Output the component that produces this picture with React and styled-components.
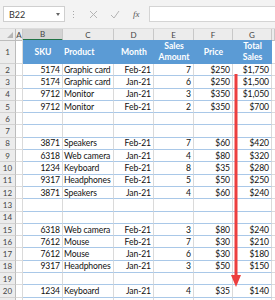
import React from 'react';
import styled, { createGlobalStyle } from 'styled-components';

const GlobalStyle = createGlobalStyle`
    html, body {
        margin: 0;
        padding: 0;
        background: #ffffff;
    }
    body {
        font-family: Lato, 'Liberation Sans', sans-serif;
        width: 275px;
        height: 300px;
        overflow: hidden;
    }
`;

const COLS = '16px 7px 40px 51px 40px 40px 39px 39px 1fr';
const ROW_H = 12.3;

const Wrapper = styled.div`
    position: relative;
    width: 275px;
    height: 300px;
    overflow: hidden;
`;

const FormulaBar = styled.div`
    display: flex;
    align-items: center;
    height: 29px;
    padding: 0 0 0 3px;
    background: #f3f3f3;
    box-sizing: border-box;
    border-bottom: 1px solid #dcdcdc;
`;

const NameBox = styled.div`
    display: flex;
    align-items: center;
    justify-content: space-between;
    width: 62px;
    height: 16px;
    padding: 0 4px 0 5px;
    box-sizing: border-box;
    background: #ffffff;
    border: 1px solid #cfcfcf;
    font-size: 9px;
    color: #333;
`;

const Caret = styled.span`
    width: 0;
    height: 0;
    border-left: 2.5px solid transparent;
    border-right: 2.5px solid transparent;
    border-top: 3px solid #666;
`;

const Grip = styled.div`
    display: flex;
    flex-direction: column;
    gap: 2px;
    margin: 0 7px 0 8px;
    span {
        width: 1px;
        height: 1px;
        background: #a8a8a8;
    }
`;

const ButtonZone = styled.div`
    display: flex;
    align-items: center;
    height: 16px;
    width: 68px;
    box-sizing: border-box;
    padding-left: 8px;
    gap: 12px;
`;

const Fx = styled.span`
    font-family: 'Liberation Serif', serif;
    font-style: italic;
    font-size: 9px;
    color: #555;
    margin-left: 1px;
`;

const FormulaInput = styled.div`
    flex: 1;
    height: 16px;
    background: #ffffff;
    border: 1px solid #d4d4d4;
    border-right: none;
    box-sizing: border-box;
`;

const Row = styled.div`
    display: grid;
    grid-template-columns: ${COLS};
    height: ${p => p.$h}px;
`;

const Corner = styled.div`
    position: relative;
    background: #ececec;
    border-right: 1px solid #bcbcbc;
    border-bottom: 1px solid #bcbcbc;
    &::after {
        content: '';
        position: absolute;
        right: 2px;
        bottom: 2px;
        border-left: 6px solid transparent;
        border-bottom: 6px solid #b5b5b5;
    }
`;

const ColHead = styled.div`
    display: flex;
    align-items: center;
    justify-content: center;
    font-size: 8px;
    color: #444;
    background: ${p => (p.$active ? '#d3d3d3' : '#ececec')};
    border-right: 1px solid #c8c8c8;
    border-bottom: ${p => (p.$active ? '2px solid #217346' : '1px solid #bcbcbc')};
    box-sizing: border-box;
`;

const RowHead = styled.div`
    display: flex;
    align-items: center;
    justify-content: center;
    font-size: 8px;
    color: #444;
    background: #ececec;
    border-right: 1px solid #bcbcbc;
    border-bottom: 1px solid #d2d2d2;
    box-sizing: border-box;
`;

const Cell = styled.div`
    display: flex;
    align-items: center;
    justify-content: ${p => (p.$align === 'left' ? 'flex-start' : 'flex-end')};
    padding: 0 2px 0 1px;
    font-size: 8.6px;
    letter-spacing: -0.1px;
    color: #111;
    white-space: nowrap;
    box-sizing: border-box;
    border-right: 1px solid #dadada;
    border-bottom: 1px solid ${p => (p.$table ? '#a9c8e8' : '#dadada')};
`;

const HeadCell = styled.div`
    display: flex;
    align-items: center;
    justify-content: ${p => (p.$align === 'left' ? 'flex-start' : 'center')};
    padding: 0 1px;
    text-align: center;
    white-space: pre-line;
    line-height: 11px;
    font-size: 8.6px;
    font-weight: 700;
    color: #ffffff;
    background: #5b9bd5;
    box-sizing: border-box;
`;

const Arrow = styled.svg`
    position: absolute;
    left: 228px;
    top: 72px;
`;

const headers = [
    { text: 'SKU' },
    { text: 'Product', align: 'left' },
    { text: 'Month' },
    { text: 'Sales\nAmount' },
    { text: 'Price' },
    { text: 'Total\nSales' },
];

const data = {
    2: ['5174', 'Graphic card', 'Feb-21', '7', '$250', '$1,750'],
    3: ['5174', 'Graphic card', 'Jan-21', '6', '$250', '$1,500'],
    4: ['9712', 'Monitor', 'Jan-21', '3', '$350', '$1,050'],
    5: ['9712', 'Monitor', 'Feb-21', '2', '$350', '$700'],
    8: ['3871', 'Speakers', 'Feb-21', '7', '$60', '$420'],
    9: ['6318', 'Web camera', 'Jan-21', '4', '$80', '$320'],
    10: ['1234', 'Keyboard', 'Feb-21', '8', '$35', '$280'],
    11: ['9317', 'Headphones', 'Feb-21', '5', '$50', '$250'],
    12: ['3871', 'Speakers', 'Jan-21', '4', '$60', '$240'],
    15: ['6318', 'Web camera', 'Feb-21', '3', '$80', '$240'],
    16: ['7612', 'Mouse', 'Feb-21', '7', '$30', '$210'],
    17: ['7612', 'Mouse', 'Jan-21', '6', '$30', '$180'],
    18: ['9317', 'Headphones', 'Jan-21', '3', '$50', '$150'],
    20: ['1234', 'Keyboard', 'Jan-21', '4', '$35', '$140'],
};

const aligns = ['right', 'left', 'right', 'right', 'right', 'right'];
const rowNumbers = Array.from({ length: 19 }, (_, i) => i + 2);
const blank = ['', '', '', '', '', ''];

const App = () => (
    <Wrapper>
        <GlobalStyle />
        <FormulaBar>
            <NameBox>
                B22
                <Caret />
            </NameBox>
            <Grip>
                <span />
                <span />
                <span />
            </Grip>
            <ButtonZone>
                <svg width="9" height="9" viewBox="0 0 9 9">
                    <path d="M1 1L8 8M8 1L1 8" stroke="#b4b4b4" strokeWidth="1" fill="none" />
                </svg>
                <svg width="10" height="9" viewBox="0 0 10 9">
                    <path d="M1 5L4 8L9 1" stroke="#b4b4b4" strokeWidth="1" fill="none" />
                </svg>
                <Fx>fx</Fx>
            </ButtonZone>
            <FormulaInput />
        </FormulaBar>

        <Row $h={11}>
            <Corner />
            {['A', 'B', 'C', 'D', 'E', 'F', 'G'].map(l => (
                <ColHead key={l} $active={l === 'B'}>{l}</ColHead>
            ))}
            <ColHead />
        </Row>

        <Row $h={24}>
            <RowHead>1</RowHead>
            <Cell />
            {headers.map(h => (
                <HeadCell key={h.text} $align={h.align}>{h.text}</HeadCell>
            ))}
            <Cell />
        </Row>

        {rowNumbers.map(n => (
            <Row key={n} $h={ROW_H}>
                <RowHead>{n}</RowHead>
                <Cell />
                {(data[n] || blank).map((v, i) => (
                    <Cell key={i} $align={aligns[i]} $table>{v}</Cell>
                ))}
                <Cell />
            </Row>
        ))}

        <Row $h={ROW_H}>
            <RowHead />
            <Cell />
            {blank.map((v, i) => (
                <Cell key={i} />
            ))}
            <Cell />
        </Row>

        <Arrow width="16" height="218" viewBox="0 0 16 218">
            <rect x="6.5" y="2" width="3" height="204" fill="#ec3f3f" />
            <path d="M3 203L13 203L8 215Z" fill="#ec3f3f" />
        </Arrow>
    </Wrapper>
);

export default App;
